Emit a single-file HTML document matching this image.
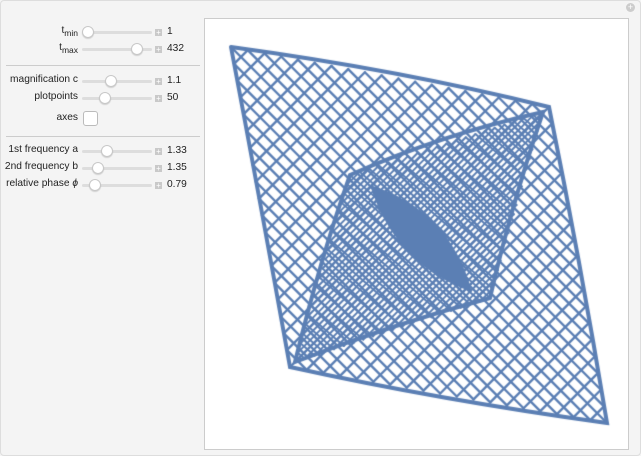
<!DOCTYPE html><html><head><style>
body{margin:0;width:641px;height:456px;background:#f4f4f4;font-family:"Liberation Sans",sans-serif;font-size:10.2px;color:#222;position:relative;overflow:hidden}
.win{position:absolute;left:0;top:0;width:639px;height:454px;border:1px solid #ddd;border-radius:4px;background:#f4f4f4}
.lbl{position:absolute;right:563px;text-align:right;white-space:nowrap}
.track{position:absolute;left:82px;width:70px;height:3px;background:#ddd;border-radius:2px}
.th{position:absolute;width:10px;height:10px;border-radius:50%;background:#fff;border:1px solid #c8c8c8;box-shadow:0 1px 1px rgba(0,0,0,.15)}
.pl{position:absolute;left:155px;width:7px;height:7px;background:#c9c9c9;color:#fff;font-size:8px;line-height:7px;text-align:center}
.val{position:absolute;left:167px}
.sep{position:absolute;left:6px;width:194px;height:1px;background:#ccc}
.plot{position:absolute;left:204px;top:18px;width:423px;height:430px;background:#fff;border:1px solid #ccc}
</style></head><body><div class="win"></div>
<div id="ctl"></div>
<div class="sep" style="top:65px"></div><div class="sep" style="top:136px"></div>
<div class="lbl" style="top:112px">axes</div>
<div style="position:absolute;left:83px;top:111px;width:13px;height:13px;background:#fff;border:1px solid #bbb;border-radius:3px"></div>
<div class="plot"><canvas id="c" width="423" height="430"></canvas></div>
<div style="position:absolute;left:626px;top:3px;width:9px;height:9px;border-radius:50%;background:#ccc;color:#fff;font-size:9px;line-height:9px;text-align:center">+</div>
<script>
var rows=[["t<sub>min</sub>",32,88,"1"],["t<sub>max</sub>",49,137,"432"],["magnification c",81,111,"1.1"],["plotpoints",98,105,"50"],["1st frequency a",151,107,"1.33"],["2nd frequency b",168,98,"1.35"],["relative phase <i>ϕ</i>",185,95,"0.79"]];
var h="";rows.forEach(function(r){h+='<div class="lbl" style="top:'+(r[1]-7)+'px">'+r[0]+'</div><div class="track" style="top:'+(r[1]-1)+'px"></div><div class="th" style="left:'+(r[2]-6)+'px;top:'+(r[1]-6)+'px"></div><div class="pl" style="top:'+(r[1]-3)+'px">+</div><div class="val" style="top:'+(r[1]-6)+'px">'+r[3]+'</div>'});
document.getElementById("ctl").innerHTML=h;
var c=document.getElementById("c").getContext("2d");var ox=205,oy=19;
c.strokeStyle="#5b7fb4";c.lineCap="round";
function mesh(A,B,C,D,n){function P(u,v){var x=(1-u)*(1-v)*A[0]+u*(1-v)*B[0]+u*v*C[0]+(1-u)*v*D[0];var y=(1-u)*(1-v)*A[1]+u*(1-v)*B[1]+u*v*C[1]+(1-u)*v*D[1];return[x-ox,y-oy]}
for(var k=0;k<=n;k++){var s=2*k/n;
 var u0=Math.max(0,s-1),u1=Math.min(1,s);c.beginPath();var p=P(u0,s-u0);c.moveTo(p[0],p[1]);p=P(u1,s-u1);c.lineTo(p[0],p[1]);c.stroke();
 var d=s-1;u0=Math.max(0,d);u1=Math.min(1,1+d);c.beginPath();p=P(u0,u0-d);c.moveTo(p[0],p[1]);p=P(u1,u1-d);c.lineTo(p[0],p[1]);c.stroke();}}
c.lineWidth=2.4;
mesh([231,47],[549,107],[607,423],[290,367],38);
c.lineWidth=2;
mesh([350,175],[543,112],[490,298],[295,362],40);
c.fillStyle="#5b7fb4";c.beginPath();c.moveTo(370-ox,185-oy);c.quadraticCurveTo(450-ox,210-oy,472-ox,292-oy);c.quadraticCurveTo(395-ox,265-oy,370-ox,185-oy);c.fill();
c.lineWidth=4;c.beginPath();c.moveTo(231-ox,47-oy);c.quadraticCurveTo(400-ox,70-oy,549-ox,107-oy);c.quadraticCurveTo(580-ox,260-oy,607-ox,423-oy);c.quadraticCurveTo(440-ox,400-oy,290-ox,367-oy);c.quadraticCurveTo(260-ox,200-oy,231-ox,47-oy);c.stroke();
c.beginPath();c.moveTo(350-ox,175-oy);c.quadraticCurveTo(440-ox,135-oy,543-ox,112-oy);c.quadraticCurveTo(510-ox,210-oy,490-ox,298-oy);c.quadraticCurveTo(390-ox,325-oy,295-ox,362-oy);c.quadraticCurveTo(320-ox,260-oy,350-ox,175-oy);c.stroke();
</script></body></html>
